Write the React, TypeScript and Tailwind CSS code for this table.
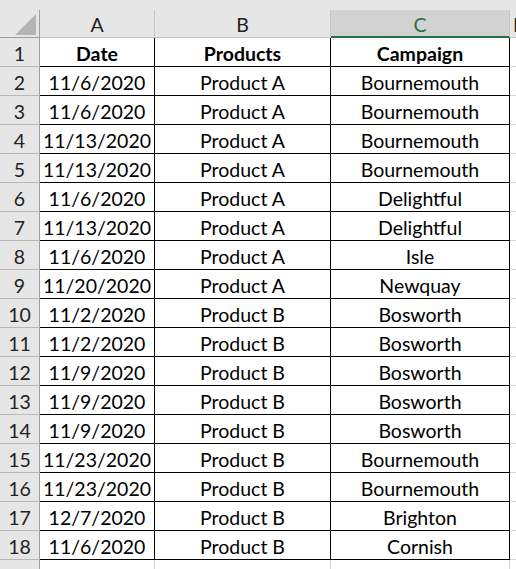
import React from 'react';

// Excel-like sheet: rows of Date / Products / Campaign
const rows: [string, string, string][] = [
  ['11/6/2020', 'Product A', 'Bournemouth'],
  ['11/6/2020', 'Product A', 'Bournemouth'],
  ['11/13/2020', 'Product A', 'Bournemouth'],
  ['11/13/2020', 'Product A', 'Bournemouth'],
  ['11/6/2020', 'Product A', 'Delightful'],
  ['11/13/2020', 'Product A', 'Delightful'],
  ['11/6/2020', 'Product A', 'Isle'],
  ['11/20/2020', 'Product A', 'Newquay'],
  ['11/2/2020', 'Product B', 'Bosworth'],
  ['11/2/2020', 'Product B', 'Bosworth'],
  ['11/9/2020', 'Product B', 'Bosworth'],
  ['11/9/2020', 'Product B', 'Bosworth'],
  ['11/9/2020', 'Product B', 'Bosworth'],
  ['11/23/2020', 'Product B', 'Bournemouth'],
  ['11/23/2020', 'Product B', 'Bournemouth'],
  ['12/7/2020', 'Product B', 'Brighton'],
  ['11/6/2020', 'Product B', 'Cornish'],
];

const cell = 'flex items-center justify-center pt-[3px] border-r border-b border-black';

function Row({ n, values, bold }: { n: number; values: [string, string, string]; bold?: boolean }) {
  return (
    <div className="flex h-[29px]">
      <div className="w-[40px] shrink-0 flex items-center justify-center pt-[3px] bg-[#e6e6e6] border-r border-b border-r-[#9e9e9e] border-b-[#b8b8b8] text-[#222]">
        {n}
      </div>
      <div className={`w-[115px] shrink-0 ${cell} ${bold ? 'font-bold' : ''}`}>{values[0]}</div>
      <div className={`w-[176px] shrink-0 ${cell} ${bold ? 'font-bold' : ''}`}>{values[1]}</div>
      <div className={`w-[179px] shrink-0 ${cell} ${bold ? 'font-bold' : ''}`}>{values[2]}</div>
      <div className="flex-1 border-b border-[#d4d4d4]" />
    </div>
  );
}

export default function App() {
  return (
    <div
      className="w-[516px] h-[569px] overflow-hidden bg-white text-[19.5px] text-black leading-none"
      style={{ fontFamily: 'Lato, "Open Sans", sans-serif' }}
    >
      <div className="h-[10px] bg-[#e6e6e6]" />
      {/* column headers */}
      <div className="flex h-[28px] bg-[#e6e6e6] text-[#222]">
        <div className="w-[40px] shrink-0 relative border-r border-b border-[#9e9e9e]">
          <svg className="absolute left-[15px] top-[4px]" width="22" height="22" viewBox="0 0 22 22">
            <polygon points="21,0 21,21 0,21" fill="#b4b4b4" />
          </svg>
        </div>
        <div className="w-[115px] shrink-0 flex items-center justify-center pt-[3px] border-r border-b border-[#c6c6c6]">A</div>
        <div className="w-[176px] shrink-0 flex items-center justify-center pt-[3px] border-r border-b border-[#c6c6c6]">B</div>
        <div className="w-[179px] shrink-0 flex items-center justify-center pt-[3px] bg-[#d2d2d2] text-[#217346] border-r border-r-[#c6c6c6] border-b-2 border-b-[#217346]">
          C
        </div>
        <div className="flex-1 overflow-hidden pl-[3px] pt-[3px] flex items-center border-b border-[#c6c6c6]">D</div>
      </div>
      <Row n={1} values={['Date', 'Products', 'Campaign']} bold />
      {rows.map((r, i) => (
        <Row key={i} n={i + 2} values={r} />
      ))}
      {/* partial row 19 */}
      <div className="flex h-[29px]">
        <div className="w-[40px] shrink-0 bg-[#e6e6e6] border-r border-[#9e9e9e]" />
        <div className="w-[115px] shrink-0 border-r border-[#d4d4d4]" />
        <div className="w-[176px] shrink-0 border-r border-[#d4d4d4]" />
        <div className="w-[179px] shrink-0 border-r border-[#d4d4d4]" />
        <div className="flex-1" />
      </div>
    </div>
  );
}
